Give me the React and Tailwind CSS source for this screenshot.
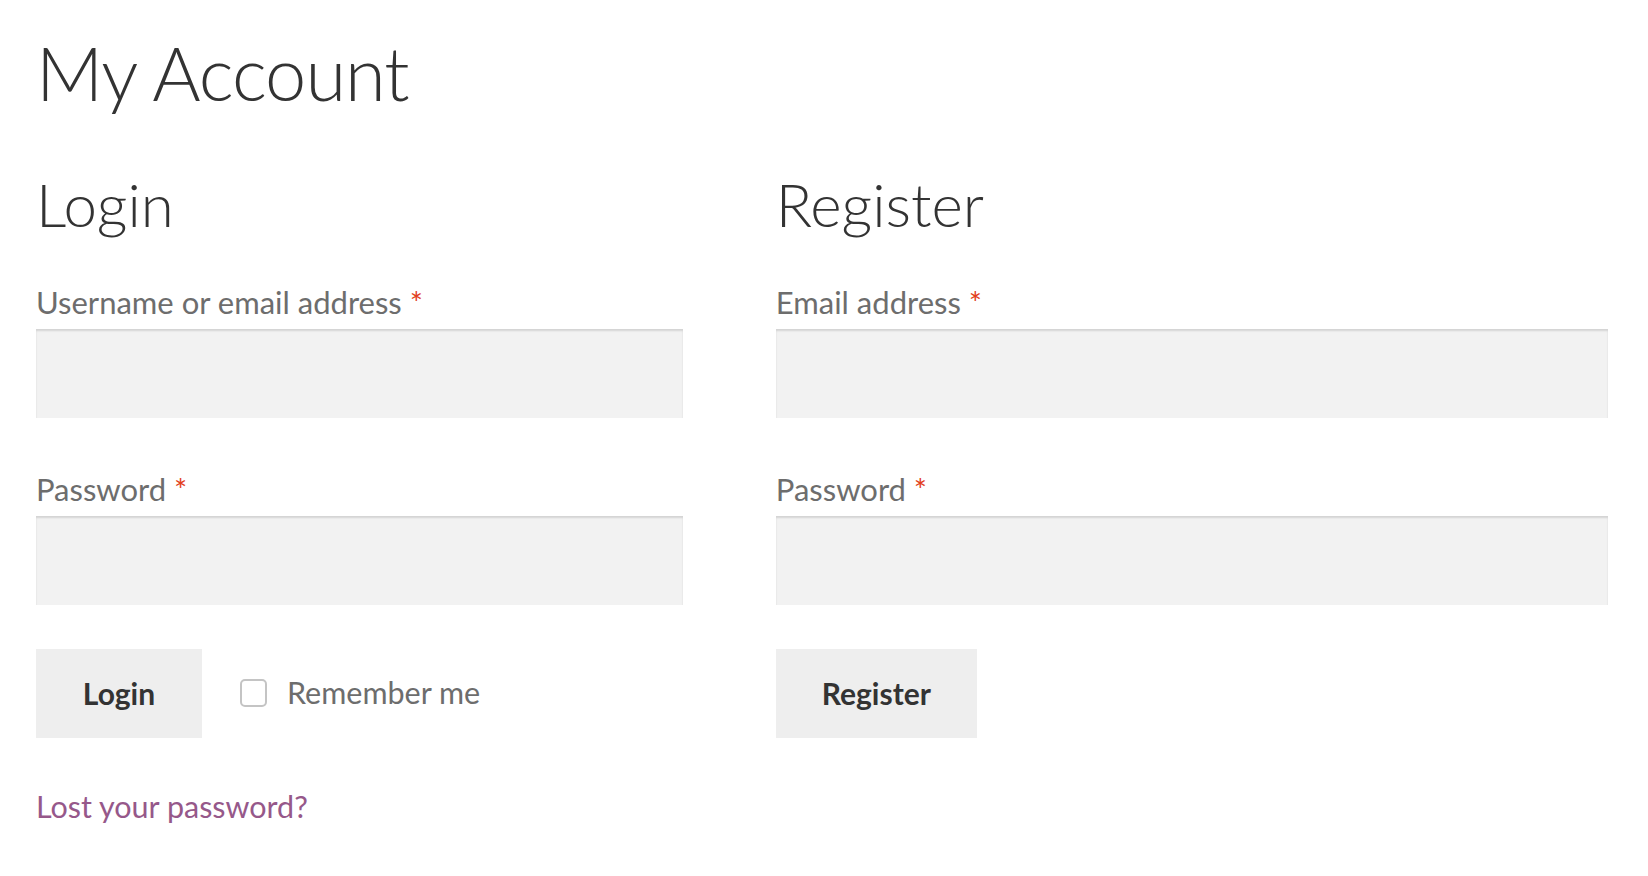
export default function App() {
  const font = { fontFamily: 'Lato, "Open Sans", sans-serif' };

  return (
    <div className="min-h-[876px] bg-white pl-[36px] pr-[40px] pt-[29px]" style={font}>
      <h1 className="text-[74px] leading-[1.2] font-light tracking-[-1px] text-[#333333]">My Account</h1>

      <div className="mt-[50px] flex justify-between">
        {/* Login column */}
        <div className="w-[41.176%]">
          <h2 className="text-[60px] leading-[1.2] font-light text-[#333333]">Login</h2>

          <div className="mt-[42px]">
            <label className="block text-[31px] leading-[40px] text-[#6d6d6d]">
              Username or email address <span className="text-[#e2401c]">*</span>
            </label>
            <input className="mt-[7px] block h-[89px] w-full bg-[#f2f2f2] shadow-[inset_0_2px_2px_rgba(0,0,0,0.125)] outline-none" />
          </div>

          <div className="mt-[51px]">
            <label className="block text-[31px] leading-[40px] text-[#6d6d6d]">
              Password <span className="text-[#e2401c]">*</span>
            </label>
            <input type="password" className="mt-[7px] block h-[89px] w-full bg-[#f2f2f2] shadow-[inset_0_2px_2px_rgba(0,0,0,0.125)] outline-none" />
          </div>

          <div className="mt-[44px] flex items-center">
            <button className="flex h-[89px] w-[166px] items-center justify-center bg-[#eeeeee] text-[30px] font-bold text-[#333333]">
              Login
            </button>
            <label className="ml-[38px] flex items-center text-[30.5px] text-[#6d6d6d]">
              <span className="h-[28px] w-[27px] rounded-[5px] border-2 border-[#c4c4c4] bg-white" />
              <span className="ml-[20px]">Remember me</span>
            </label>
          </div>

          <a href="#" className="mt-[48px] block text-[30.5px] leading-[40px] text-[#96588a]">
            Lost your password?
          </a>
        </div>

        {/* Register column */}
        <div className="w-[52.94%]">
          <h2 className="text-[60px] leading-[1.2] font-light text-[#333333]">Register</h2>

          <div className="mt-[42px]">
            <label className="block text-[31px] leading-[40px] text-[#6d6d6d]">
              Email address <span className="text-[#e2401c]">*</span>
            </label>
            <input className="mt-[7px] block h-[89px] w-full bg-[#f2f2f2] shadow-[inset_0_2px_2px_rgba(0,0,0,0.125)] outline-none" />
          </div>

          <div className="mt-[51px]">
            <label className="block text-[31px] leading-[40px] text-[#6d6d6d]">
              Password <span className="text-[#e2401c]">*</span>
            </label>
            <input type="password" className="mt-[7px] block h-[89px] w-full bg-[#f2f2f2] shadow-[inset_0_2px_2px_rgba(0,0,0,0.125)] outline-none" />
          </div>

          <div className="mt-[44px]">
            <button className="flex h-[89px] w-[201px] items-center justify-center bg-[#eeeeee] text-[30px] font-bold text-[#333333]">
              Register
            </button>
          </div>
        </div>
      </div>
    </div>
  );
}
